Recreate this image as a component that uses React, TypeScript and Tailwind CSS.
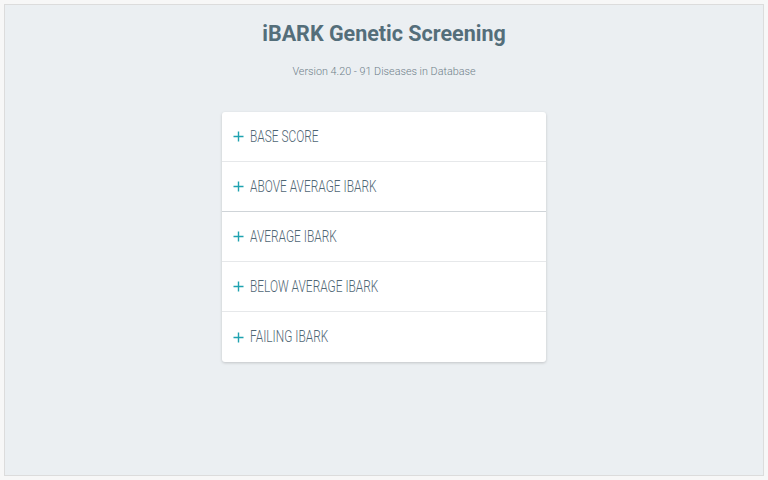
import React from "react";

const items = [
  { label: "BASE SCORE", strong: false },
  { label: "ABOVE AVERAGE IBARK", strong: true },
  { label: "AVERAGE IBARK", strong: false },
  { label: "BELOW AVERAGE IBARK", strong: false },
  { label: "FAILING IBARK", strong: false },
];

function Plus() {
  return (
    <svg width="11" height="11" viewBox="0 0 11 11" className="shrink-0">
      <path d="M5.5 0.5V10.5M0.5 5.5H10.5" stroke="#1fa2b0" strokeWidth="1.4" />
    </svg>
  );
}

export default function App() {
  return (
    <div className="w-[768px] h-[480px] bg-[#f7f7f7] p-[4px]" style={{ fontFamily: "Roboto, 'Liberation Sans', sans-serif" }}>
      <div className="w-full h-full bg-[#ebeff2] border border-[#dcdcdc] flex flex-col items-center">
        <h1 className="mt-[15px] text-[21.5px] leading-[28px] font-bold text-[#546e7a]">iBARK Genetic Screening</h1>
        <p className="mt-[17px] text-[10.8px] leading-[14px] font-light text-[#6f7f8a]">Version 4.20 - 91 Diseases in Database</p>
        <div className="mt-[33px] w-[324px] bg-white rounded-[3px] shadow-[0_1px_3px_rgba(0,0,0,0.18)] flex flex-col">
          {items.map((it, i) => (
            <div
              key={it.label}
              className={
                "h-[50px] flex items-center pl-[11px] gap-[6px] " +
                (i < items.length - 1 ? (it.strong ? "border-b border-[#cfd4d8]" : "border-b border-[#e6e8ea]") : "")
              }
            >
              <Plus />
              <span className="inline-block origin-left scale-x-[0.7] text-[17px] font-light text-[#4f6674] whitespace-nowrap">
                {it.label}
              </span>
            </div>
          ))}
        </div>
      </div>
    </div>
  );
}
